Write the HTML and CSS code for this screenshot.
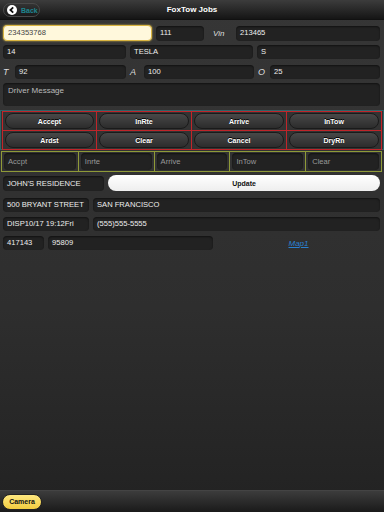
FILE: index.html
```html
<!DOCTYPE html>
<html>
<head>
<meta charset="utf-8">
<link rel="stylesheet" href="styles.css">
</head>
<body>
<div class="page">
  <header class="header">
    <div class="back"><span class="back-ic"><svg width="10" height="10" viewBox="0 0 10 10"><circle cx="5" cy="5" r="5" fill="#fff"/><path d="M6.2 2.3 L3.4 5 L6.2 7.7" stroke="#111" stroke-width="1.8" fill="none"/></svg></span><span class="back-t">Back</span></div>
    <div class="title">FoxTow Jobs</div>
  </header>
  <main class="content">
    <div class="row r1">
      <div class="in yellow w149">234353768</div>
      <div class="in w48">111</div>
      <div class="lbl lvin">Vin</div>
      <div class="in grow">213465</div>
    </div>
    <div class="row r2">
      <div class="in grow">14</div>
      <div class="in grow">TESLA</div>
      <div class="in grow">S</div>
    </div>
    <div class="row r3">
      <div class="lbl lt">T</div>
      <div class="in w111">92</div>
      <div class="lbl la">A</div>
      <div class="in w110">100</div>
      <div class="lbl lo">O</div>
      <div class="in grow">25</div>
    </div>
    <div class="msg">Driver Message</div>
    <div class="btngrid">
      <div class="cell"><div class="btn">Accept</div></div>
      <div class="cell"><div class="btn">InRte</div></div>
      <div class="cell"><div class="btn">Arrive</div></div>
      <div class="cell"><div class="btn">InTow</div></div>
      <div class="cell"><div class="btn">Ardst</div></div>
      <div class="cell"><div class="btn">Clear</div></div>
      <div class="cell"><div class="btn">Cancel</div></div>
      <div class="cell"><div class="btn">DryRn</div></div>
    </div>
    <div class="ingrid">
      <div class="icell"><div class="in ph">Accpt</div></div>
      <div class="icell"><div class="in ph">Inrte</div></div>
      <div class="icell"><div class="in ph">Arrive</div></div>
      <div class="icell"><div class="in ph">InTow</div></div>
      <div class="icell"><div class="in ph">Clear</div></div>
    </div>
    <div class="row r5">
      <div class="in w101">JOHN'S RESIDENCE</div>
      <div class="update">Update</div>
    </div>
    <div class="row r6">
      <div class="in w86">500 BRYANT STREET</div>
      <div class="in grow">SAN FRANCISCO</div>
    </div>
    <div class="row r7">
      <div class="in w86">DISP10/17 19:12Fri</div>
      <div class="in grow">(555)555-5555</div>
    </div>
    <div class="row r8">
      <div class="in w41">417143</div>
      <div class="in w165">95809</div>
      <div class="maparea"><a class="map" href="#">Map1</a></div>
    </div>
  </main>
  <footer class="footer">
    <div class="camera">Camera</div>
  </footer>
</div>
</body>
</html>
```
FILE: styles.css
```css
* { box-sizing: border-box; }
html, body { margin: 0; padding: 0; }
body {
  width: 384px;
  height: 512px;
  overflow: hidden;
  font-family: "Liberation Sans", Arial, sans-serif;
  background: #2a2a2a;
}
.page {
  width: 384px;
  height: 512px;
  display: flex;
  flex-direction: column;
  background: linear-gradient(#363636, #2e2e2e 60%, #222 100%);
}
.header {
  height: 20px;
  position: relative;
  background: linear-gradient(#3c3c3c, #151515);
  border-bottom: 1px solid #111;
  display: flex;
  align-items: center;
  justify-content: center;
  flex-shrink: 0;
}
.back {
  position: absolute;
  left: 3px;
  top: 3px;
  width: 37px;
  height: 14px;
  border-radius: 7px;
  background: linear-gradient(#333, #1a1a1a);
  border: 1px solid #4a4a4a;
  display: flex;
  align-items: center;
  padding-left: 3px;
  gap: 4px;
}
.back-ic { display: flex; }
.back-t {
  color: #1e8790;
  font-weight: bold;
  font-size: 7px;
}
.title {
  color: #fff;
  font-weight: bold;
  font-size: 8px;
}
.content {
  flex: 1;
  display: flex;
  flex-direction: column;
  padding: 5px 0 0 0;
}
.row {
  display: flex;
  align-items: center;
  gap: 4px;
  padding: 0 4px 0 3px;
}
.in {
  background: #222;
  border-radius: 4px;
  box-shadow: inset 0 1px 2px rgba(0,0,0,0.5);
  color: #eee;
  font-size: 7.6px;
  height: 14px;
  line-height: 14px;
  padding: 0 4px;
  white-space: nowrap;
  overflow: hidden;
}
.grow { flex: 1; }
.yellow {
  background: #fff8dc;
  color: #444;
  border: 1px solid #d9b440;
  box-shadow: 0 0 2px #e0c050;
  height: 16px;
  line-height: 14px;
}
.w149 { width: 149px; }
.w48 { width: 48px; }
.w111 { width: 111px; }
.w110 { width: 110px; }
.w101 { width: 101px; }
.w86 { width: 86px; }
.w41 { width: 41px; }
.w165 { width: 165px; }
.lbl {
  color: #ddd;
  font-style: italic;
  font-size: 9px;
}
.lvin { width: 19px; margin-left: 5px; font-size: 8px; }
.lt { width: 8px; }
.la { width: 10px; }
.lo { width: 8px; }
.r1 { height: 16px; }
.r1 .in:not(.yellow) { height: 15px; }
.r2 { margin-top: 4px; }
.r3 { margin-top: 6px; }
.msg {
  margin: 4px 4px 0 3px;
  height: 23px;
  background: #222;
  border-radius: 4px;
  box-shadow: inset 0 1px 2px rgba(0,0,0,0.5);
  color: #bbb;
  font-size: 8px;
  padding: 3px 5px;
}
.btngrid {
  margin-top: 4px;
  display: grid;
  grid-template-columns: repeat(4, 1fr);
  border: 1px solid #2d6468;
  padding: 0 1px;
}
.cell {
  border: 1px solid #c0252a;
  margin: 0 0 -1px -1px;
  padding: 1px 2px 1px 2px;
  height: 20px;
  display: flex;
  align-items: center;
}
.cell:nth-child(4n+1) { margin-left: 0; }
.btn {
  flex: 1;
  height: 16px;
  border-radius: 8px;
  background: linear-gradient(#484848, #2c2c2c);
  border: 1px solid #1a1a1a;
  color: #fff;
  font-weight: bold;
  font-size: 7px;
  display: flex;
  align-items: center;
  justify-content: center;
  text-shadow: 0 -1px 0 #000;
}
.ingrid {
  margin-top: 1px;
  display: grid;
  grid-template-columns: repeat(5, 1fr);
  border: 1px solid #8f9a38;
  margin-left: 1px;
  margin-right: 2px;
}
.icell {
  border-left: 1px solid #8f9a38;
  padding: 1px 2px;
}
.icell:first-child { border-left: none; }
.ph { color: #999; height: 17px; line-height: 17px; }
.r5 { margin-top: 3px; height: 16px; }
.r5 .in { height: 15px; line-height: 15px; }
.update {
  flex: 1;
  height: 16px;
  border-radius: 8px;
  background: linear-gradient(#fff, #eee);
  color: #111;
  font-weight: bold;
  font-size: 7px;
  display: flex;
  align-items: center;
  justify-content: center;
}
.r6 { margin-top: 7px; }
.r7 { margin-top: 5px; }
.r8 { margin-top: 5px; }
.maparea {
  flex: 1;
  display: flex;
  justify-content: center;
}
.map {
  color: #2a80d0;
  font-size: 8px;
  font-style: italic;
  text-decoration: underline;
}
.footer {
  height: 22px;
  flex-shrink: 0;
  background: linear-gradient(#3c3c3c, #1a1a1a);
  border-top: 1px solid #444;
  display: flex;
  align-items: center;
  padding-left: 2px;
}
.camera {
  width: 40px;
  height: 16px;
  border-radius: 8px;
  background: linear-gradient(#ffe880, #f2cc40);
  border: 1px solid #222;
  color: #111;
  font-weight: bold;
  font-size: 7px;
  display: flex;
  align-items: center;
  justify-content: center;
}
```
